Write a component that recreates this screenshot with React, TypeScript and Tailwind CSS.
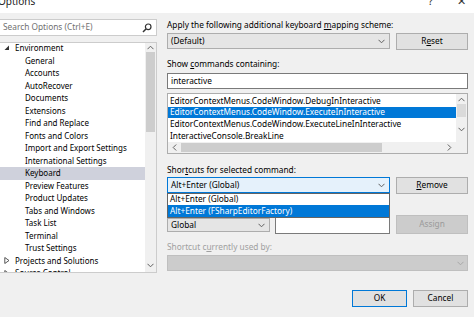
import React from "react";

const Chevron = ({ color = "#606060" }: { color?: string }) => (
  <svg width="7" height="5" viewBox="0 0 7 5">
    <polyline points="0.5,0.8 3.5,3.8 6.5,0.8" fill="none" stroke={color} strokeWidth="1" />
  </svg>
);

const Up = ({ color = "#606060" }: { color?: string }) => (
  <svg width="7" height="5" viewBox="0 0 7 5">
    <polyline points="0.5,4.2 3.5,1.2 6.5,4.2" fill="none" stroke={color} strokeWidth="1" />
  </svg>
);

const Left = () => (
  <svg width="5" height="7" viewBox="0 0 5 7">
    <polyline points="4.2,0.5 1.2,3.5 4.2,6.5" fill="none" stroke="#606060" strokeWidth="1" />
  </svg>
);
const Right = () => (
  <svg width="5" height="7" viewBox="0 0 5 7">
    <polyline points="0.8,0.5 3.8,3.5 0.8,6.5" fill="none" stroke="#606060" strokeWidth="1" />
  </svg>
);

const treeItems = [
  "General",
  "Accounts",
  "AutoRecover",
  "Documents",
  "Extensions",
  "Find and Replace",
  "Fonts and Colors",
  "Import and Export Settings",
  "International Settings",
  "Keyboard",
  "Preview Features",
  "Product Updates",
  "Tabs and Windows",
  "Task List",
  "Terminal",
  "Trust Settings",
];

const commands = [
  "EditorContextMenus.CodeWindow.DebugInInteractive",
  "EditorContextMenus.CodeWindow.ExecuteInInteractive",
  "EditorContextMenus.CodeWindow.ExecuteLineInInteractive",
  "InteractiveConsole.BreakLine",
];

const Triangle = () => (
  <svg width="6" height="7" viewBox="0 0 6 7" className="mr-[5px] shrink-0">
    <polygon points="0.8,0.5 5,3.5 0.8,6.5" fill="none" stroke="#444" strokeWidth="0.9" />
  </svg>
);

export default function App() {
  return (
    <div className="w-[474px] h-[317px] bg-[#f0f0f0] overflow-hidden relative font-['Noto_Sans',sans-serif] text-[8.3px] text-black leading-none">
      {/* title bar */}
      <div className="h-[13px] bg-white flex items-start justify-between overflow-hidden">
        <span className="-ml-[2px] -mt-[4px] text-[10px] leading-[10px] text-[#222]">Options</span>
        <div className="flex items-start gap-[24px] mr-[8px] -mt-[4px] text-[11px] leading-[10px] text-[#333]">
          <span>?</span>
          <span>✕</span>
        </div>
      </div>

      <div className="flex pt-[6px]">
        {/* left column */}
        <div className="w-[157px] flex flex-col">
          <div className="h-[17px] bg-white border border-[#cccccc] border-l-0 flex items-center justify-between pl-[3px] pr-[4px]">
            <span className="text-[#707070]">Search Options (Ctrl+E)</span>
            <svg width="10" height="10" viewBox="0 0 10 10">
              <circle cx="6.2" cy="3.8" r="2.8" fill="none" stroke="#333" strokeWidth="1.2" />
              <line x1="4.2" y1="5.8" x2="1" y2="9" stroke="#333" strokeWidth="1.5" />
            </svg>
          </div>
          <div className="mt-[6px] h-[231px] bg-white border border-[#cccccc] border-l-0 flex overflow-hidden text-[8px]">
            <div className="flex-1 flex flex-col -mt-[1px]">
              <div className="h-[12.5px] shrink-0 flex items-center pl-[4px]">
                <svg width="6" height="6" viewBox="0 0 6 6" className="mr-[5px]">
                  <polygon points="5,0.5 5,5 0.5,5" fill="#333" />
                </svg>
                <span>Environment</span>
              </div>
              {treeItems.map((t) => (
                <div
                  key={t}
                  className={`h-[12.5px] shrink-0 flex items-center pl-[25px] ${t === "Keyboard" ? "bg-[#cfd1dc]" : ""}`}
                >
                  {t}
                </div>
              ))}
              <div className="h-[12.5px] shrink-0 flex items-center pl-[4px]">
                <Triangle />
                <span>Projects and Solutions</span>
              </div>
              <div className="h-[12.5px] shrink-0 flex items-center pl-[4px]">
                <Triangle />
                <span>Source Control</span>
              </div>
            </div>
            <div className="w-[11px] bg-[#f0f0f0] flex flex-col items-center">
              <div className="h-[9px] flex items-center">
                <Up />
              </div>
              <div className="w-[9px] h-[80px] bg-[#cdcdcd]" />
              <div className="flex-1" />
              <div className="h-[14px] flex items-center">
                <Chevron />
              </div>
            </div>
          </div>
        </div>

        {/* right column */}
        <div className="ml-[10px] w-[301px] flex flex-col">
          <div className="h-[12px] flex items-center whitespace-pre">
            Apply the following additional keyboard <span className="underline">m</span>apping scheme:
          </div>
          <div className="mt-[2px] flex gap-[6px]">
            <div className="w-[223px] h-[16px] bg-[#e5e5e5] border border-[#adadad] flex items-center justify-between pl-[3px] pr-[4px]">
              <span>(Default)</span>
              <Chevron />
            </div>
            <div className="w-[72px] h-[17px] bg-[#e1e1e1] border border-[#adadad] flex items-center justify-center">
              R<span className="underline">e</span>set
            </div>
          </div>
          <div className="mt-[8px] h-[12px] flex items-center whitespace-pre">
            Show <span className="underline">c</span>ommands containing:
          </div>
          <div className="mt-[3px] h-[16px] bg-white border border-[#7a7a7a] flex items-center pl-[3px]">
            interactive
          </div>
          <div className="mt-[4px] h-[61px] bg-white border border-[#adadad] flex overflow-hidden">
            <div className="flex-1 flex flex-col min-w-0">
              <div className="flex-1 flex flex-col pt-[1px]">
                {commands.map((c, i) => (
                  <div
                    key={c}
                    className={`h-[11.7px] shrink-0 flex items-center pl-[2px] whitespace-nowrap ${i === 1 ? "bg-[#0078d7] text-white" : ""}`}
                  >
                    {c}
                  </div>
                ))}
              </div>
              <div className="h-[11px] bg-[#f0f0f0] flex items-center">
                <div className="w-[13px] flex justify-center">
                  <Left />
                </div>
                <div className="w-[201px] h-[9px] bg-[#cdcdcd]" />
                <div className="flex-1" />
                <div className="w-[13px] flex justify-center">
                  <Right />
                </div>
              </div>
            </div>
            <div className="w-[11px] bg-[#f0f0f0] flex flex-col items-center">
              <div className="h-[10px] flex items-center">
                <Up />
              </div>
              <div className="w-[9px] h-[13px] bg-[#dadada]" />
              <div className="flex-1 flex items-center">
                <Chevron />
              </div>
              <div className="h-[11px] w-full bg-[#f0f0f0]" />
            </div>
          </div>
          <div className="mt-[10px] h-[12px] flex items-center">
            Shor<span className="underline">t</span>cuts for selected command:
          </div>
          <div className="mt-[1px] flex gap-[6px] relative">
            <div className="w-[223px] h-[16px] bg-[#e5f1fb] border border-[#0078d7] flex items-center justify-between pl-[3px] pr-[4px]">
              <span>Alt+Enter (Global)</span>
              <Chevron />
            </div>
            <div className="w-[72px] h-[17px] bg-[#e1e1e1] border border-[#adadad] flex items-center justify-center">
              <span className="underline">R</span>emove
            </div>
            {/* open dropdown popup */}
            <div className="absolute left-0 top-[16px] w-[223px] bg-white border border-[#646464] flex flex-col z-10">
              <div className="h-[11px] flex items-center pl-[2px]">Alt+Enter (Global)</div>
              <div className="h-[11.5px] flex items-center pl-[2px] bg-[#0078d7] text-white">
                Alt+Enter (FSharpEditorFactory)
              </div>
            </div>
          </div>
          <div className="mt-[21px] flex items-end gap-[5px]">
            <div className="w-[103px] mb-[2px] h-[14px] bg-[#e5e5e5] border border-[#adadad] flex items-center justify-between pl-[3px] pr-[4px]">
              <span>Global</span>
              <Chevron />
            </div>
            <div className="w-[115px] h-[19px] bg-white border border-[#7a7a7a]" />
            <div className="ml-[1px] w-[72px] h-[19px] bg-[#cccccc] border border-[#bfbfbf] flex items-center justify-center text-[#9a9a9a]">
              Assign
            </div>
          </div>
          <div className="mt-[7px] h-[12px] flex items-center text-[#a0a0a0]">
            Shortcut c<span className="underline">u</span>rrently used by:
          </div>
          <div className="mt-[2px] h-[16px] bg-[#cccccc] border border-[#bfbfbf] flex items-center justify-end pr-[3px]">
            <Chevron color="#a8a8a8" />
          </div>
          <div className="mt-[19px] flex justify-end gap-[6px]">
            <div className="w-[55px] h-[17px] bg-[#e1e1e1] border border-[#0078d7] flex items-center justify-center">
              OK
            </div>
            <div className="w-[55px] h-[17px] bg-[#e1e1e1] border border-[#adadad] flex items-center justify-center">
              Cancel
            </div>
          </div>
        </div>
      </div>
    </div>
  );
}
